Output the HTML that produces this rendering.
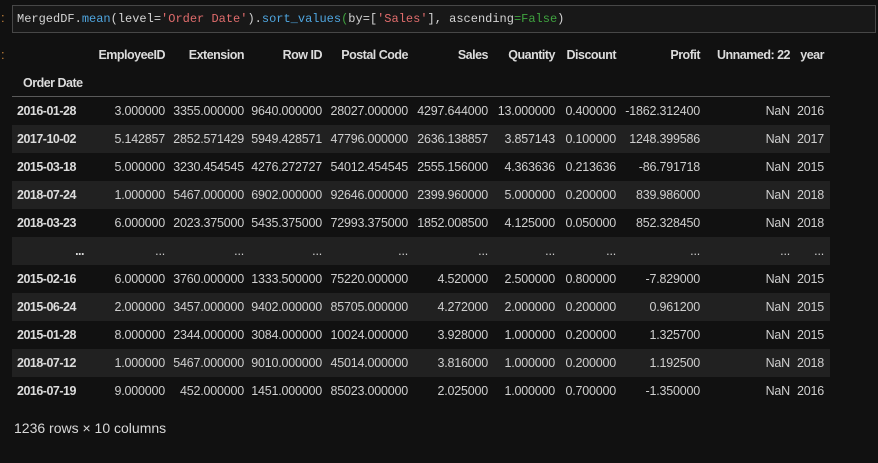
<!DOCTYPE html><html><head><style>
body{margin:0;background:#111;width:878px;height:463px;overflow:hidden;font-family:"Liberation Sans",sans-serif;color:#cfcfcf;position:relative}
.code{position:absolute;left:12px;top:5px;width:864px;height:28px;border:1px solid #474747;background:#181818;box-sizing:border-box;font-family:"Liberation Mono",monospace;font-size:12px;line-height:26px;padding-left:4px;color:#d4d4d4}
.p{position:absolute;left:1px;color:#c0803a;font-size:13px}
.r{position:absolute;left:12px;width:818px;height:28px}
.s{background:#212121}
.c{position:absolute;top:0;line-height:28px;font-size:12.5px;white-space:nowrap;letter-spacing:-0.2px}
.h{font-weight:bold;color:#dcdcdc;letter-spacing:-0.5px}
.hr{position:absolute;left:12px;width:818px;top:96px;height:1px;background:#5a5a5a}
</style></head><body>
<div class="p" style="top:10px">:</div>
<div class="p" style="top:47px">:</div>
<div class="code">MergedDF.<span style="color:#4fa6e0">mean</span>(level<span style="color:#d4d4d4">=</span><span style="color:#e06c6c">'Order Date'</span>).<span style="color:#4fa6e0">sort_values</span><span style="color:#3fa33f">(</span>by=[<span style="color:#e06c6c">'Sales'</span>], ascending<span style="color:#3fa33f">=False</span>)</div>
<div id="t"></div>
<div class="hr"></div>
<div style="position:absolute;left:14px;top:420px;font-size:14px;color:#d8d8d8">1236 rows × 10 columns</div>
<script>
const R=[165,244,322,408,488,555,616,700,790,824];
const H=["EmployeeID","Extension","Row ID","Postal Code","Sales","Quantity","Discount","Profit","Unnamed: 22","year"];
const D=[
["2016-01-28","3.000000","3355.000000","9640.000000","28027.000000","4297.644000","13.000000","0.400000","-1862.312400","NaN","2016"],
["2017-10-02","5.142857","2852.571429","5949.428571","47796.000000","2636.138857","3.857143","0.100000","1248.399586","NaN","2017"],
["2015-03-18","5.000000","3230.454545","4276.272727","54012.454545","2555.156000","4.363636","0.213636","-86.791718","NaN","2015"],
["2018-07-24","1.000000","5467.000000","6902.000000","92646.000000","2399.960000","5.000000","0.200000","839.986000","NaN","2018"],
["2018-03-23","6.000000","2023.375000","5435.375000","72993.375000","1852.008500","4.125000","0.050000","852.328450","NaN","2018"],
["...","...","...","...","...","...","...","...","...","...","..."],
["2015-02-16","6.000000","3760.000000","1333.500000","75220.000000","4.520000","2.500000","0.800000","-7.829000","NaN","2015"],
["2015-06-24","2.000000","3457.000000","9402.000000","85705.000000","4.272000","2.000000","0.200000","0.961200","NaN","2015"],
["2015-01-28","8.000000","2344.000000","3084.000000","10024.000000","3.928000","1.000000","0.200000","1.325700","NaN","2015"],
["2018-07-12","1.000000","5467.000000","9010.000000","45014.000000","3.816000","1.000000","0.200000","1.192500","NaN","2018"],
["2016-07-19","9.000000","452.000000","1451.000000","85023.000000","2.025000","1.000000","0.700000","-1.350000","NaN","2016"]];
let h='<div class="r" style="top:41px">';
H.forEach((t,i)=>h+=`<div class="c h" style="right:${830-R[i]}px">${t}</div>`);
h+='</div><div class="r" style="top:69px"><div class="c h" style="left:11px">Order Date</div></div>';
D.forEach((row,j)=>{
h+=`<div class="r${j%2?' s':''}" style="top:${97+28*j}px"><div class="c h" style="${row[0]=='...'?'right:746px':'left:5px'}">${row[0]}</div>`;
for(let i=1;i<11;i++)h+=`<div class="c" style="right:${830-R[i-1]}px">${row[i]}</div>`;
h+='</div>';});
document.getElementById('t').innerHTML=h;
</script>
</body></html>
